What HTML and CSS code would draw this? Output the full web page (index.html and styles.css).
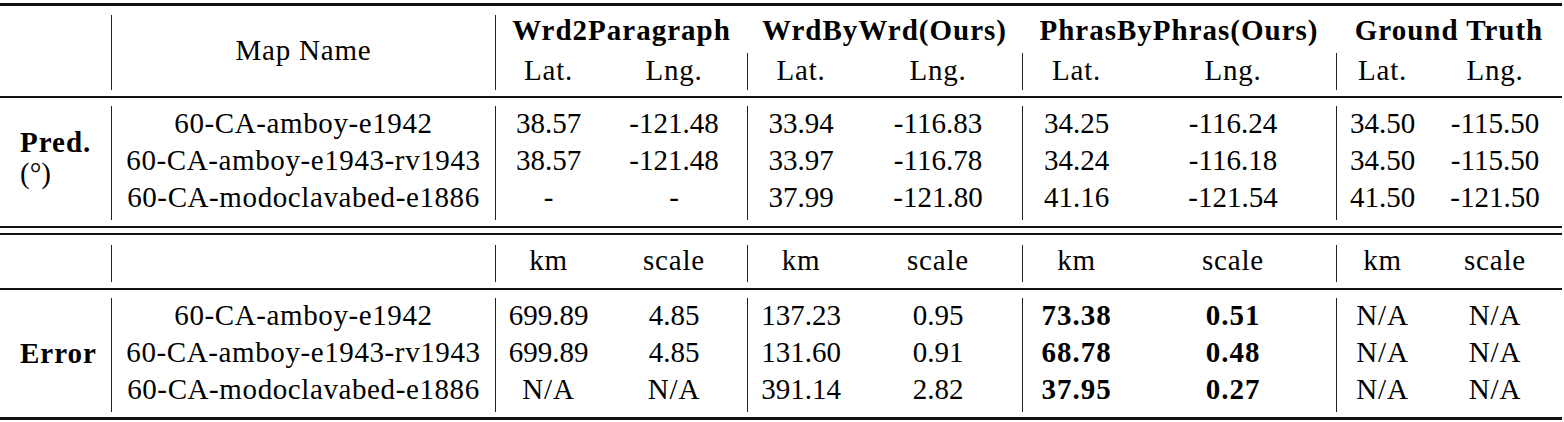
FILE: index.html
```html
<!DOCTYPE html>
<html lang="en">
  <head>
    <meta charset="UTF-8" />
    <title>Georeferencing results</title>
    <link rel="stylesheet" href="styles.css">
  </head>
  <body>
    <table class="results">
      <colgroup>
        <col class="w-label">
        <col class="w-map">
        <col class="w-a-lat"><col class="w-a-lng">
        <col class="w-b-lat"><col class="w-b-lng">
        <col class="w-c-lat"><col class="w-c-lng">
        <col class="w-d-lat"><col class="w-d-lng">
      </colgroup>
      <tbody>
        <tr class="rule thick"><td colspan="10"></td></tr>
        <tr class="gap g9"><td colspan="10"></td></tr>

        <!-- header -->
        <tr class="head-top">
          <td rowspan="2"></td>
          <td rowspan="2" class="vl map-head">Map Name</td>
          <th colspan="2" class="vl group">Wrd2Paragraph</th>
          <th colspan="2" class="group">WrdByWrd(Ours)</th>
          <th colspan="2" class="group">PhrasByPhras(Ours)</th>
          <th colspan="2" class="group">Ground Truth</th>
        </tr>
        <tr class="head-sub">
          <td class="vl">Lat.</td><td>Lng.</td>
          <td class="vl">Lat.</td><td>Lng.</td>
          <td class="vl">Lat.</td><td>Lng.</td>
          <td class="vl">Lat.</td><td>Lng.</td>
        </tr>

        <tr class="gap g6"><td colspan="10"></td></tr>
        <tr class="rule"><td colspan="10"></td></tr>
        <tr class="gap g8"><td colspan="10"></td></tr>

        <!-- predictions -->
        <tr>
          <td rowspan="3" class="side pred-side"><b>Pred.</b><br>(°)</td>
          <td class="vl name">60-CA-amboy-e1942</td>
          <td class="vl">38.57</td><td>-121.48</td>
          <td class="vl">33.94</td><td>-116.83</td>
          <td class="vl">34.25</td><td>-116.24</td>
          <td class="vl">34.50</td><td>-115.50</td>
        </tr>
        <tr>
          <td class="vl name">60-CA-amboy-e1943-rv1943</td>
          <td class="vl">38.57</td><td>-121.48</td>
          <td class="vl">33.97</td><td>-116.78</td>
          <td class="vl">34.24</td><td>-116.18</td>
          <td class="vl">34.50</td><td>-115.50</td>
        </tr>
        <tr class="block-end">
          <td class="vl name">60-CA-modoclavabed-e1886</td>
          <td class="vl">-</td><td>-</td>
          <td class="vl">37.99</td><td>-121.80</td>
          <td class="vl">41.16</td><td>-121.54</td>
          <td class="vl">41.50</td><td>-121.50</td>
        </tr>

        <tr class="gap g6"><td colspan="10"></td></tr>
        <tr class="rule"><td colspan="10"></td></tr>
        <tr class="gap g5"><td colspan="10"></td></tr>
        <tr class="rule"><td colspan="10"></td></tr>
        <tr class="gap g10"><td colspan="10"></td></tr>

        <!-- units -->
        <tr class="unit-row">
          <td></td>
          <td class="vl"></td>
          <td class="vl">km</td><td>scale</td>
          <td class="vl">km</td><td>scale</td>
          <td class="vl">km</td><td>scale</td>
          <td class="vl">km</td><td>scale</td>
        </tr>

        <tr class="gap g6"><td colspan="10"></td></tr>
        <tr class="rule"><td colspan="10"></td></tr>
        <tr class="gap g8"><td colspan="10"></td></tr>

        <!-- errors -->
        <tr>
          <td rowspan="3" class="side err-side"><b>Error</b></td>
          <td class="vl name">60-CA-amboy-e1942</td>
          <td class="vl">699.89</td><td>4.85</td>
          <td class="vl">137.23</td><td>0.95</td>
          <td class="vl best">73.38</td><td class="best">0.51</td>
          <td class="vl na">N/A</td><td class="na">N/A</td>
        </tr>
        <tr>
          <td class="vl name">60-CA-amboy-e1943-rv1943</td>
          <td class="vl">699.89</td><td>4.85</td>
          <td class="vl">131.60</td><td>0.91</td>
          <td class="vl best">68.78</td><td class="best">0.48</td>
          <td class="vl na">N/A</td><td class="na">N/A</td>
        </tr>
        <tr class="block-end">
          <td class="vl name">60-CA-modoclavabed-e1886</td>
          <td class="vl na">N/A</td><td class="na">N/A</td>
          <td class="vl">391.14</td><td>2.82</td>
          <td class="vl best">37.95</td><td class="best">0.27</td>
          <td class="vl na">N/A</td><td class="na">N/A</td>
        </tr>

        <tr class="gap g5"><td colspan="10"></td></tr>
        <tr class="rule thick"><td colspan="10"></td></tr>
      </tbody>
    </table>
  </body>
</html>
```

FILE: styles.css
```css
body {
  margin: 0;
  background: #fff;
  color: #000;
  font-family: "Liberation Serif", "Times New Roman", serif;
  font-size: 29px;
}

.results {
  border-collapse: separate;
  border-spacing: 0;
  table-layout: fixed;
  width: 1562px;
  margin-top: 3px;
}

.w-label { width: 111px; }
.w-map { width: 384px; }
.w-a-lat { width: 106px; }
.w-a-lng { width: 146px; }
.w-b-lat { width: 107px; }
.w-b-lng { width: 168px; }
.w-c-lat { width: 108px; }
.w-c-lng { width: 206px; }
.w-d-lat { width: 92px; }
.w-d-lng { width: 134px; }

.results td,
.results th {
  padding: 0 0 2px;
  text-align: center;
  vertical-align: middle;
  line-height: 35px;
  white-space: nowrap;
  font-weight: normal;
}

.results .vl {
  border-left: 1px solid #222;
}

/* booktabs style rules */
.results .rule td {
  height: 0;
  padding: 0;
  line-height: 0;
  font-size: 0;
  border-top: 2px solid #111;
}

.results .rule.thick td {
  border-top-width: 3px;
}

.results .gap td {
  padding: 0;
  line-height: 0;
  font-size: 0;
}

.g5 td { height: 5px; }
.g6 td { height: 6px; }
.g8 td { height: 8px; }
.g9 td { height: 9px; }
.g10 td { height: 10px; }

/* header */
.results .group {
  font-weight: bold;
  letter-spacing: 1px;
  line-height: 30px;
  padding-bottom: 8px;
}

.results .map-head {
  padding-bottom: 5px;
  letter-spacing: 0.8px;
}

.results .head-sub td,
.results .unit-row td,
.results .na {
  letter-spacing: 0.8px;
}

.results .name {
  letter-spacing: 0.6px;
}

.results .unit-row td {
  line-height: 30px;
  padding-bottom: 7px;
}

.results .block-end td {
  padding-bottom: 5px;
}

/* row labels */
.results .side {
  text-align: left;
  padding-left: 20px;
}

.side b,
.results .best {
  font-weight: bold;
  letter-spacing: 1px;
}

.results .pred-side {
  line-height: 31px;
  padding-bottom: 10px;
}

.results .err-side {
  padding-bottom: 4px;
}
```
